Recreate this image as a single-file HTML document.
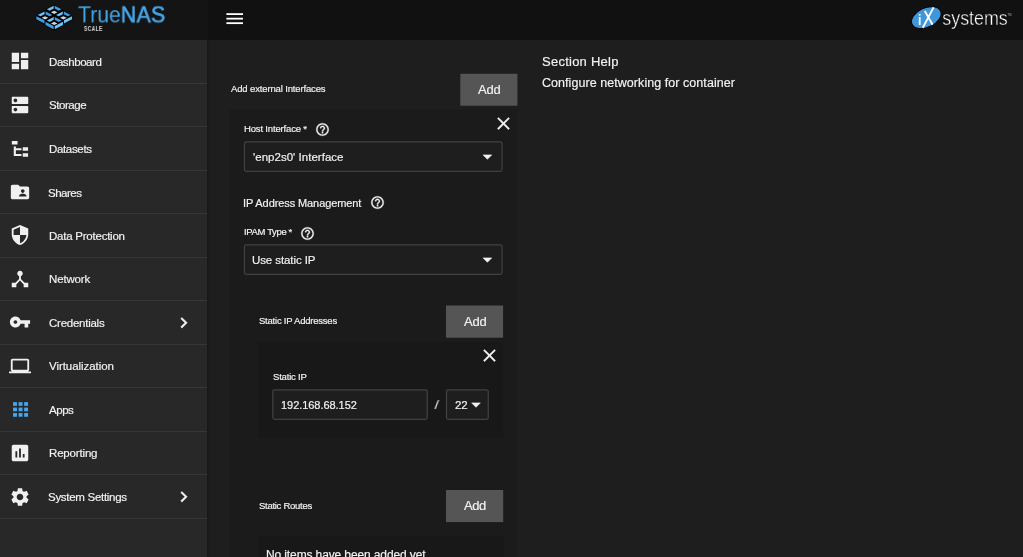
<!DOCTYPE html>
<html><head><meta charset="utf-8"><title>TrueNAS</title>
<style>
*{box-sizing:border-box;margin:0;padding:0}
html,body{width:1023px;height:557px;overflow:hidden;background:#1e1e1e;font-family:"Liberation Sans",sans-serif;color:#f0f0f0}
.abs{position:absolute}
#hdr{position:absolute;left:0;top:0;width:1023px;height:40px;background:linear-gradient(90deg,#141414 0,#141414 207px,#111111 208.5px,#111111 100%)}
#side{position:absolute;left:0;top:40px;width:207px;height:517px;background:#282828}
.nav{position:absolute;left:0;width:207px;height:43.5px;border-bottom:1px solid #363636}
.nav span{position:absolute;left:49px;top:0;line-height:43.5px;font-size:12px;color:#f2f2f2;white-space:nowrap}
.nav svg.ic{position:absolute;left:8.9px;top:9.75px;width:22px;height:22px;fill:#f0f0f0}
.nav svg.ch{position:absolute;left:173.3px;top:11.1px;width:21.5px;height:21.5px;fill:#f2f2f2;stroke:#f2f2f2;stroke-width:0.4px}
.t{position:absolute;white-space:nowrap;color:#f2f2f2;line-height:1;will-change:transform;-webkit-text-stroke:0.18px #f2f2f2}
.btn{position:absolute;width:57px;height:32px;background:#555555;color:#f2f2f2;font-size:13px;line-height:32px;text-align:center}
.card{position:absolute;background:#1b1b1b}
.box{position:absolute;border:1px solid #3c3c3c;background:#1e1e1e;border-radius:1px}
.help{position:absolute;width:15px;height:15px;fill:#f2f2f2;stroke:#f2f2f2;stroke-width:0.5px}
.x{position:absolute;width:21px;height:21px;fill:#f2f2f2;stroke:#f2f2f2;stroke-width:0.3px}
.arr{position:absolute;width:0;height:0;border-left:4.5px solid transparent;border-right:4.5px solid transparent;border-top:4.5px solid #f2f2f2}
</style></head><body>
<div id="hdr">
<svg class="abs" style="left:0;top:0" width="90" height="40" viewBox="0 0 90 40"><polygon points="35.51,16.19 54.19,4.62 72.88,16.19 72.88,19.59 54.19,30.89 35.51,19.59" fill="#050505"/><polygon points="46.92,9.35 53.66,5.80 53.66,8.60 49.67,10.75" fill="#6fc4f6"/><polygon points="54.73,5.80 61.46,9.35 58.72,10.75 54.73,8.60" fill="#3d9fe4"/><polygon points="50.96,12.26 54.19,10.65 57.42,12.26 54.19,13.88" fill="#d4d4d4"/><polygon points="37.77,14.95 44.50,11.40 44.50,14.20 40.52,16.35" fill="#6fc4f6"/><polygon points="45.58,11.40 52.31,14.95 49.56,16.35 45.58,14.20" fill="#3d9fe4"/><polygon points="41.81,17.86 45.04,16.25 48.27,17.86 45.04,19.48" fill="#d4d4d4"/><polygon points="56.08,14.95 62.81,11.40 62.81,14.20 58.82,16.35" fill="#6fc4f6"/><polygon points="63.89,11.40 70.62,14.95 67.87,16.35 63.89,14.20" fill="#3d9fe4"/><polygon points="60.12,17.86 63.35,16.25 66.58,17.86 63.35,19.48" fill="#d4d4d4"/><polygon points="46.92,20.56 53.66,17.00 53.66,19.80 49.67,21.96" fill="#6fc4f6"/><polygon points="54.73,17.00 61.46,20.56 58.72,21.96 54.73,19.80" fill="#3d9fe4"/><polygon points="50.96,23.46 54.19,21.85 57.42,23.46 54.19,25.08" fill="#d4d4d4"/><polygon points="36.32,16.19 44.45,20.29 44.45,23.62 36.32,19.32" fill="#3d9fe4"/><polygon points="63.94,20.29 72.07,16.19 72.07,19.32 63.94,23.62" fill="#6fc4f6"/><polygon points="45.47,21.79 53.60,25.89 53.60,29.23 45.47,24.92" fill="#3d9fe4"/><polygon points="54.79,25.89 62.92,21.79 62.92,24.92 54.79,29.23" fill="#6fc4f6"/></svg>
<div class="t" style="left:78.2px;top:0px;font-size:23.4px;line-height:28px;color:#47a6e6;letter-spacing:0;transform-origin:0 100%;transform:scale(0.905,0.94);-webkit-text-stroke:0">True<b style="font-weight:normal;-webkit-text-stroke:0.7px #47a6e6;letter-spacing:0.5px">NAS</b></div>
<div class="t" style="left:83.6px;top:26.1px;font-size:6.3px;line-height:6px;font-weight:bold;color:#d4d4d4;letter-spacing:0.4px;transform-origin:0 0;transform:scaleX(0.8);-webkit-text-stroke:0">SCALE</div>
<svg class="abs" style="left:220px;top:0;fill:#fff" width="30" height="40" viewBox="0 0 30 40"><rect x="6.400" y="13.200" width="16.600" height="1.800"/><rect x="6.400" y="17.750" width="16.600" height="1.800"/><rect x="6.400" y="22.250" width="16.600" height="1.800"/></svg>
<svg class="abs" style="left:905px;top:0;will-change:transform" width="118" height="40" viewBox="0 0 118 40">
<ellipse cx="21.300" cy="17.600" rx="16" ry="9.900" transform="rotate(-25 21.300 17.600)" fill="#050505"/>
<ellipse cx="21.300" cy="17.600" rx="15.200" ry="9.100" transform="rotate(-25 21.300 17.600)" fill="#3f96d9"/>
<text x="12.900" y="24.900" font-family="Liberation Sans, sans-serif" font-size="15.500" font-weight="bold" fill="#fff" textLength="3.400" lengthAdjust="spacingAndGlyphs">i</text>
<path d="M17.800 27.800 L28.600 7.400 M19.800 11 L27.600 24.800" stroke="#fff" stroke-width="1.900" fill="none"/>
<text x="37.300" y="24.900" font-family="Liberation Sans, sans-serif" font-size="19.500" fill="#fff" stroke="#111111" stroke-width="0.400" textLength="65.500" lengthAdjust="spacingAndGlyphs">systems</text>
<text x="102.600" y="16.400" font-family="Liberation Sans, sans-serif" font-size="2.600" fill="#bbb">TM</text>
</svg>
</div>
<div id="side">
<div class="nav" style="top:0.0px"><svg class="ic" viewBox="0 0 24 24" style="left:8.9px;top:9.75px"><path d="M3 13h8V3H3v10zm0 8h8v-6H3v6zm10 0h8V11h-8v10zm0-18v6h8V3h-8z"/></svg><div class="t" style="left:49.18px;top:15.80px;font-size:11.5px;line-height:13.8px;letter-spacing:-0.421px;">Dashboard</div></div>
<div class="nav" style="top:43.5px"><svg class="ic" viewBox="0 0 24 24" style="left:9.15px;top:10.8px"><path d="M20 13H4c-.55 0-1 .45-1 1v6c0 .55.45 1 1 1h16c.55 0 1-.45 1-1v-6c0-.55-.45-1-1-1zM7 19c-1.1 0-2-.9-2-2s.9-2 2-2 2 .9 2 2-.9 2-2 2zM20 3H4c-.55 0-1 .45-1 1v6c0 .55.45 1 1 1h16c.55 0 1-.45 1-1V4c0-.55-.45-1-1-1zM7 9c-1.1 0-2-.9-2-2s.9-2 2-2 2 .9 2 2-.9 2-2 2z"/></svg><div class="t" style="left:48.79px;top:15.20px;font-size:11.5px;line-height:13.8px;letter-spacing:-0.434px;">Storage</div></div>
<div class="nav" style="top:87.0px"><svg class="ic" viewBox="0 0 24 24" style="left:9.45px;top:10.6px"><path d="M3.100 3.400h6.200v3.600H3.100zM5.200 9.200h2.300v2h6.100v2.100H7.500v4.200h6.100v2.200H5.200zM15 10.200h5.800v3.700H15zM15 16.700h5.800v3.800H15z"/></svg><div class="t" style="left:49.18px;top:15.95px;font-size:11.5px;line-height:13.8px;letter-spacing:-0.342px;">Datasets</div></div>
<div class="nav" style="top:130.5px"><svg class="ic" viewBox="0 0 24 24" style="left:9.4px;top:10.65px"><path d="M20 6h-8l-2-2H4c-1.1 0-1.99.9-1.99 2L2 18c0 1.1.9 2 2 2h16c1.1 0 2-.9 2-2V8c0-1.1-.9-2-2-2zm-5 3c1.1 0 2 .9 2 2s-.9 2-2 2-2-.9-2-2 .9-2 2-2zm4 8h-8v-1c0-1.33 2.67-2 4-2s4 .67 4 2v1z"/></svg><div class="t" style="left:48.10px;top:16.44px;font-size:11.5px;line-height:13.8px;letter-spacing:-0.489px;">Shares</div></div>
<div class="nav" style="top:174.0px"><svg class="ic" viewBox="0 0 24 24" style="left:8.95px;top:9.9px"><path d="M12 1L3 5v6c0 5.55 3.84 10.74 9 12 5.16-1.26 9-6.45 9-12V5l-9-4zm0 10.99h7c-.53 4.12-3.28 7.79-7 8.94V12H5V6.3l7-3.11v8.8z"/></svg><div class="t" style="left:49.18px;top:15.95px;font-size:11.5px;line-height:13.8px;letter-spacing:-0.233px;">Data Protection</div></div>
<div class="nav" style="top:217.5px"><svg class="ic" viewBox="0 0 24 24" style="left:8.9px;top:10.55px"><path d="M17 16l-4-4V8.820C14.16 8.4 15 7.3 15 6c0-1.660-1.340-3-3-3S9 4.340 9 6c0 1.3.84 2.4 2 2.820V12l-4 4H3v5h5v-3.050l4-4.200 4 4.200V21h5v-5h-4z"/></svg><div class="t" style="left:49.19px;top:15.45px;font-size:11.5px;line-height:13.8px;letter-spacing:-0.155px;">Network</div></div>
<div class="nav" style="top:261.0px"><svg class="ic" viewBox="0 0 24 24" style="left:9.3px;top:10.15px"><path d="M12.65 10C11.83 7.67 9.61 6 7 6c-3.31 0-6 2.69-6 6s2.69 6 6 6c2.61 0 4.83-1.67 5.65-4H17v4h4v-4h2v-4H12.65zM7 14c-1.1 0-2-.9-2-2s.9-2 2-2 2 .9 2 2-.9 2-2 2z"/></svg><div class="t" style="left:48.73px;top:15.95px;font-size:11.5px;line-height:13.8px;letter-spacing:-0.253px;">Credentials</div><svg class="ch" viewBox="0 0 24 24"><path d="M10 6L8.59 7.41 13.17 12l-4.58 4.590L10 18l6-6z"/></svg></div>
<div class="nav" style="top:304.5px"><svg class="ic" viewBox="0 0 24 24" style="left:9.3px;top:10.8px"><path d="M20 18c1.1 0 1.99-.9 1.99-2L22 6c0-1.1-.9-2-2-2H4c-1.1 0-2 .9-2 2v10c0 1.1.9 2 2 2H0v2h24v-2h-4zM4 6h16v10H4V6z"/></svg><div class="t" style="left:48.53px;top:15.44px;font-size:11.5px;line-height:13.8px;letter-spacing:-0.052px;">Virtualization</div></div>
<div class="nav" style="top:348.0px"><svg class="abs" style="left:0;top:0;fill:#45a6ee" width="40" height="43" viewBox="0 0 40 43"><rect x="13.05" y="14.15" width="3.900" height="3.700"/><rect x="13.05" y="19.60" width="3.900" height="3.700"/><rect x="13.05" y="25.05" width="3.900" height="3.700"/><rect x="18.60" y="14.15" width="3.900" height="3.700"/><rect x="18.60" y="19.60" width="3.900" height="3.700"/><rect x="18.60" y="25.05" width="3.900" height="3.700"/><rect x="24.15" y="14.15" width="3.900" height="3.700"/><rect x="24.15" y="19.60" width="3.900" height="3.700"/><rect x="24.15" y="25.05" width="3.900" height="3.700"/></svg><div class="t" style="left:48.57px;top:15.95px;font-size:11.5px;line-height:13.8px;letter-spacing:-0.464px;">Apps</div></div>
<div class="nav" style="top:391.5px"><svg class="ic" viewBox="0 0 24 24" style="left:9.4px;top:10.95px"><path d="M19 3H5c-1.1 0-2 .9-2 2v14c0 1.1.9 2 2 2h14c1.1 0 2-.9 2-2V5c0-1.1-.9-2-2-2zM9 17H7v-7h2v7zm4 0h-2V7h2v10zm4 0h-2v-4h2v4z"/></svg><div class="t" style="left:49.19px;top:15.45px;font-size:11.5px;line-height:13.8px;letter-spacing:-0.169px;">Reporting</div></div>
<div class="nav" style="top:435.0px"><svg class="ic" viewBox="0 0 24 24" style="left:9.3px;top:10.55px"><path d="M19.14 12.94c.04-.3.06-.61.06-.94 0-.32-.02-.64-.07-.94l2.03-1.58c.18-.14.23-.41.12-.61l-1.92-3.32c-.12-.22-.37-.29-.59-.22l-2.39.96c-.5-.38-1.03-.7-1.62-.94l-.36-2.54c-.04-.24-.24-.41-.48-.41h-3.84c-.24 0-.43.17-.47.41l-.36 2.54c-.59.24-1.13.57-1.62.94l-2.39-.96c-.22-.08-.47 0-.59.22L2.74 8.87c-.12.21-.08.47.12.61l2.03 1.58c-.05.3-.09.63-.09.94s.02.64.07.94l-2.03 1.58c-.18.14-.23.41-.12.61l1.92 3.32c.12.22.37.29.59.22l2.39-.96c.5.38 1.03.7 1.62.94l.36 2.54c.05.24.24.41.48.41h3.84c.24 0 .44-.17.47-.41l.36-2.54c.59-.24 1.13-.56 1.62-.94l2.39.96c.22.08.47 0 .59-.22l1.92-3.32c.12-.22.07-.47-.12-.61l-2.01-1.58zM12 15.6c-1.98 0-3.6-1.62-3.6-3.6s1.620-3.6 3.6-3.6 3.6 1.62 3.6 3.6-1.620 3.6-3.6 3.6z"/></svg><div class="t" style="left:48.10px;top:16.09px;font-size:11.5px;line-height:13.8px;letter-spacing:-0.291px;">System Settings</div><svg class="ch" viewBox="0 0 24 24"><path d="M10 6L8.59 7.41 13.17 12l-4.58 4.590L10 18l6-6z"/></svg></div>
</div>
<div class="abs" style="left:207px;top:40px;width:3px;height:517px;background:linear-gradient(90deg,rgba(0,0,0,0.22),rgba(0,0,0,0))"></div>
<svg class="abs" style="left:0;top:0" width="1023" height="557" viewBox="0 0 1023 557"><rect x="229.70" y="109.70" width="287.70" height="447.30" fill="#1b1b1b"/><rect x="258.00" y="341.90" width="245.10" height="95.80" fill="#181818"/><rect x="258.00" y="535.70" width="245.20" height="21.30" fill="#181818"/><rect x="460.30" y="73.80" width="57.10" height="31.90" fill="#555555"/><rect x="446.00" y="305.50" width="57.10" height="32.20" fill="#555555"/><rect x="446.00" y="490.00" width="57.20" height="32.10" fill="#555555"/><rect x="244.43" y="141.93" width="257.65" height="29.45" rx="1.8" fill="#1e1e1e" stroke="#414141" stroke-width="1.25"/><rect x="244.43" y="244.82" width="257.65" height="29.55" rx="1.8" fill="#1e1e1e" stroke="#414141" stroke-width="1.25"/><rect x="272.82" y="389.82" width="154.45" height="29.45" rx="1.8" fill="#1e1e1e" stroke="#414141" stroke-width="1.25"/><rect x="446.52" y="389.82" width="41.75" height="29.45" rx="1.8" fill="#1e1e1e" stroke="#414141" stroke-width="1.25"/><path d="M483.10 154.90h8.60l-4.30 4.40z" fill="#f2f2f2" stroke="#f2f2f2" stroke-width="0.6" stroke-linejoin="round"/><path d="M483.10 257.90h8.60l-4.30 4.40z" fill="#f2f2f2" stroke="#f2f2f2" stroke-width="0.6" stroke-linejoin="round"/><path d="M471.70 402.90h8.60l-4.30 4.40z" fill="#f2f2f2" stroke="#f2f2f2" stroke-width="0.6" stroke-linejoin="round"/></svg>
<div class="t" style="left:231.39px;top:82.52px;font-size:9.5px;line-height:11.4px;letter-spacing:-0.140px;">Add external Interfaces</div>
<div class="t" style="left:477.68px;top:82.15px;font-size:13px;line-height:15.6px;letter-spacing:-0.188px;">Add</div>
<svg class="x" style="left:493px;top:113.1px" viewBox="0 0 24 24"><path d="M19 6.410L17.59 5 12 10.59 6.410 5 5 6.410 10.59 12 5 17.59 6.410 19 12 13.410 17.59 19 19 17.59 13.410 12z"/></svg>
<div class="t" style="left:244.00px;top:122.60px;font-size:9.5px;line-height:11.4px;letter-spacing:-0.165px;">Host Interface *</div>
<svg class="help" style="left:314.5px;top:122.4px" viewBox="0 0 24 24"><path d="M11 18h2v-2h-2v2zm1-16C6.48 2 2 6.48 2 12s4.48 10 10 10 10-4.48 10-10S17.52 2 12 2zm0 18c-4.41 0-8-3.59-8-8s3.590-8 8-8 8 3.590 8 8-3.590 8-8 8zm0-14c-2.21 0-4 1.79-4 4h2c0-1.1.9-2 2-2s2 .9 2 2c0 2-3 1.75-3 5h2c0-2.25 3-2.5 3-5 0-2.21-1.790-4-4-4z"/></svg>
<div class="t" style="left:253.28px;top:151.09px;font-size:11.5px;line-height:13.8px;letter-spacing:0.026px;">'enp2s0' Interface</div>
<div class="t" style="left:243.07px;top:197.02px;font-size:11px;line-height:13.2px;letter-spacing:-0.094px;">IP Address Management</div>
<svg class="help" style="left:369.7px;top:195.1px" viewBox="0 0 24 24"><path d="M11 18h2v-2h-2v2zm1-16C6.48 2 2 6.48 2 12s4.48 10 10 10 10-4.48 10-10S17.52 2 12 2zm0 18c-4.41 0-8-3.59-8-8s3.590-8 8-8 8 3.590 8 8-3.590 8-8 8zm0-14c-2.21 0-4 1.79-4 4h2c0-1.1.9-2 2-2s2 .9 2 2c0 2-3 1.75-3 5h2c0-2.25 3-2.5 3-5 0-2.21-1.790-4-4-4z"/></svg>
<div class="t" style="left:244.16px;top:225.76px;font-size:9.5px;line-height:11.4px;letter-spacing:-0.362px;">IPAM Type *</div>
<svg class="help" style="left:299.9px;top:225.5px" viewBox="0 0 24 24"><path d="M11 18h2v-2h-2v2zm1-16C6.48 2 2 6.48 2 12s4.48 10 10 10 10-4.48 10-10S17.52 2 12 2zm0 18c-4.41 0-8-3.59-8-8s3.590-8 8-8 8 3.590 8 8-3.590 8-8 8zm0-14c-2.21 0-4 1.79-4 4h2c0-1.1.9-2 2-2s2 .9 2 2c0 2-3 1.75-3 5h2c0-2.25 3-2.5 3-5 0-2.21-1.790-4-4-4z"/></svg>
<div class="t" style="left:251.84px;top:254.09px;font-size:11.5px;line-height:13.8px;letter-spacing:-0.094px;">Use static IP</div>
<div class="t" style="left:258.88px;top:314.83px;font-size:9.5px;line-height:11.4px;letter-spacing:-0.226px;">Static IP Addresses</div>
<div class="t" style="left:463.68px;top:314.05px;font-size:13px;line-height:15.6px;letter-spacing:-0.153px;">Add</div>
<svg class="x" style="left:478.8px;top:345.1px" viewBox="0 0 24 24"><path d="M19 6.410L17.59 5 12 10.59 6.410 5 5 6.410 10.59 12 5 17.59 6.410 19 12 13.410 17.59 19 19 17.59 13.410 12z"/></svg>
<div class="t" style="left:272.51px;top:371.23px;font-size:9.5px;line-height:11.4px;letter-spacing:-0.186px;">Static IP</div>
<div class="t" style="left:280.50px;top:399.45px;font-size:11px;line-height:13.2px;letter-spacing:-0.050px;">192.168.68.152</div>
<div class="t" style="left:434.90px;top:398.40px;font-size:12px;line-height:14.4px;letter-spacing:0.000px;transform:skewX(-7deg) scaleY(1.12)">/</div>
<div class="t" style="left:454.80px;top:399.15px;font-size:11.5px;line-height:13.8px;letter-spacing:-0.059px;">22</div>
<div class="t" style="left:258.88px;top:500.23px;font-size:9.5px;line-height:11.4px;letter-spacing:-0.279px;">Static Routes</div>
<div class="t" style="left:463.68px;top:497.70px;font-size:13px;line-height:15.6px;letter-spacing:-0.430px;">Add</div>
<div class="t" style="left:265.60px;top:547.60px;font-size:12px;line-height:14.4px;letter-spacing:-0.120px;">No items have been added yet.</div>
<div class="t" style="left:542.02px;top:53.90px;font-size:13px;line-height:15.6px;letter-spacing:0.248px;">Section Help</div>
<div class="t" style="left:542.20px;top:76.25px;font-size:12.5px;line-height:15px;letter-spacing:0.055px;">Configure networking for container</div>
</body></html>
